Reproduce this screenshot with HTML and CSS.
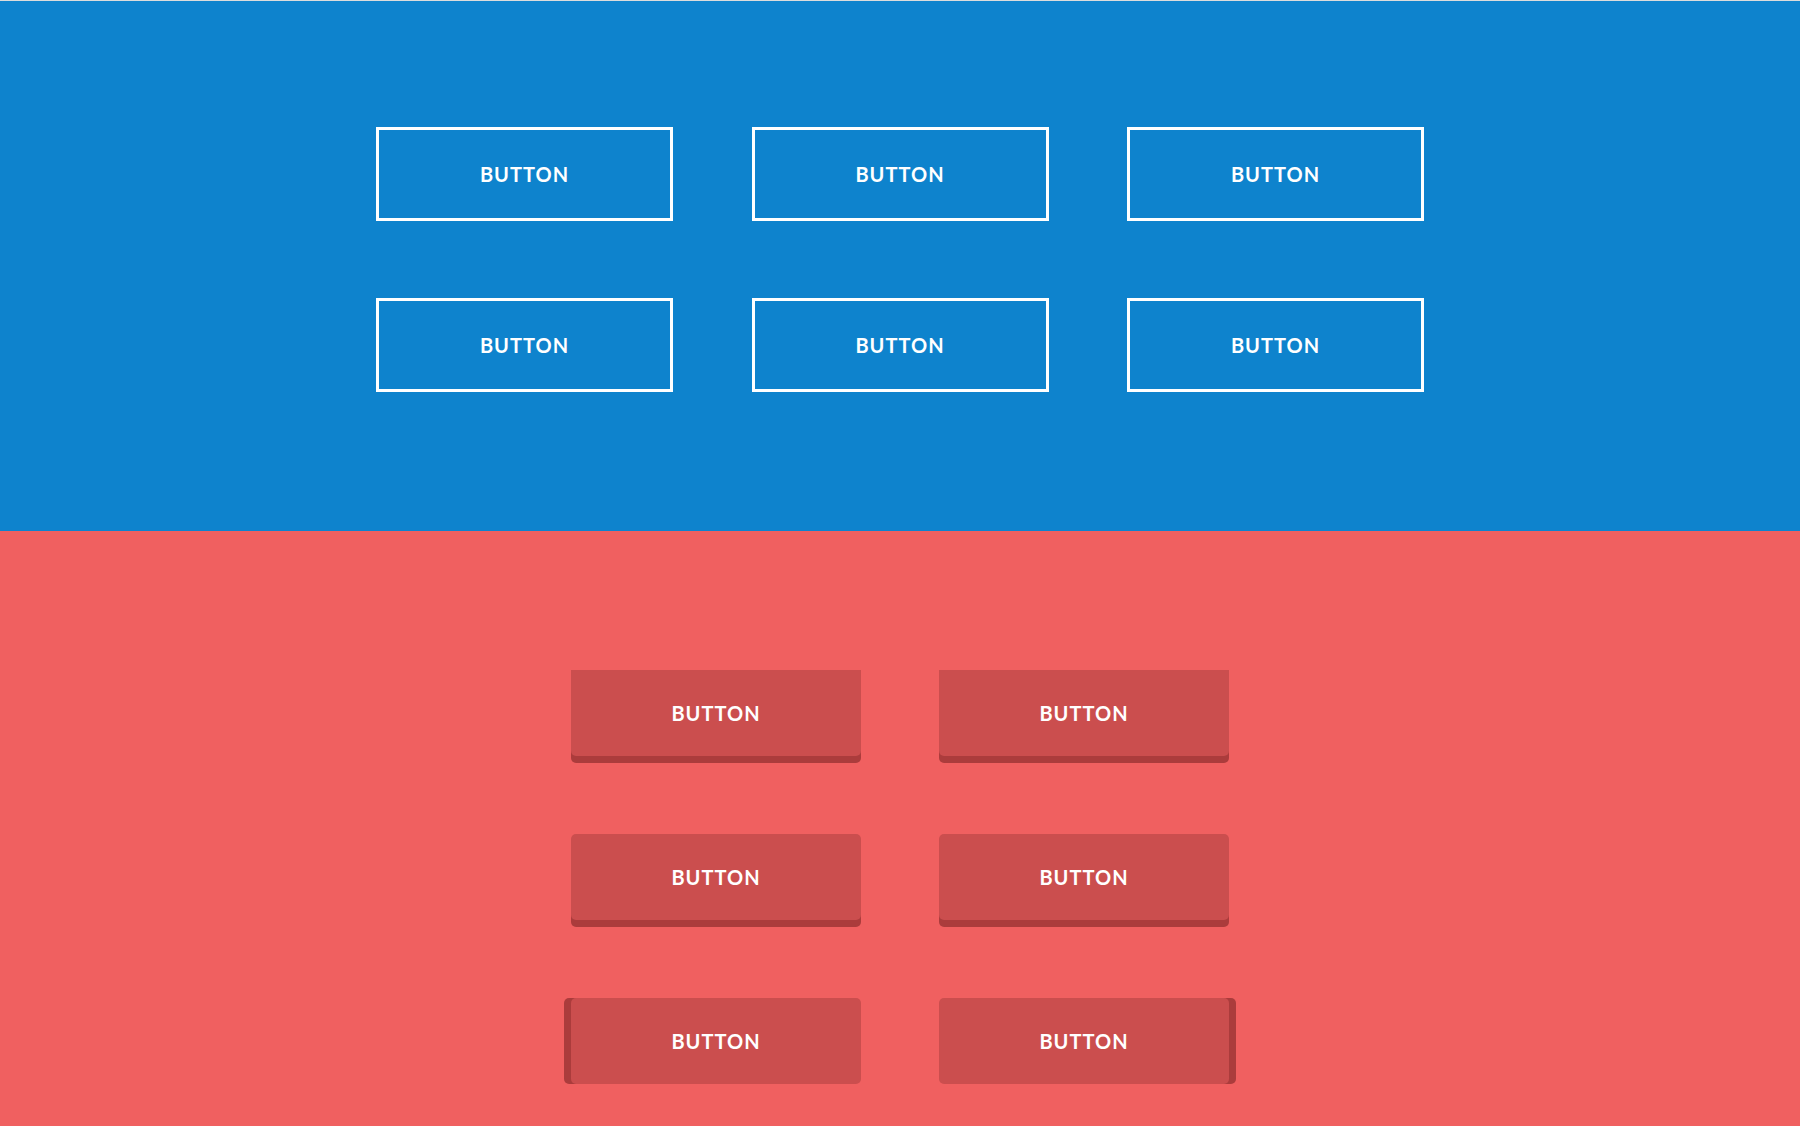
FILE: index.html
```html
<!DOCTYPE html>
<html lang="en">
<head>
  <meta charset="UTF-8" />
  <title>Creative Buttons</title>
  <link rel="stylesheet" href="styles.css">
</head>
<body>
  <section class="section section-blue">
    <div class="btn-grid btn-grid-3">
      <button class="btn btn-outline">Button</button>
      <button class="btn btn-outline">Button</button>
      <button class="btn btn-outline">Button</button>
      <button class="btn btn-outline">Button</button>
      <button class="btn btn-outline">Button</button>
      <button class="btn btn-outline">Button</button>
    </div>
  </section>

  <section class="section section-red">
    <div class="btn-grid btn-grid-2">
      <button class="btn btn-3d btn-3d-flat">Button</button>
      <button class="btn btn-3d btn-3d-flat">Button</button>
      <button class="btn btn-3d btn-3d-down">Button</button>
      <button class="btn btn-3d btn-3d-down">Button</button>
      <button class="btn btn-3d btn-3d-left">Button</button>
      <button class="btn btn-3d btn-3d-right">Button</button>
    </div>
  </section>
</body>
</html>
```

FILE: styles.css
```css
body {
  margin: 0;
  border-top: 1px solid #dcdcdc;
  font-family: Lato, 'Liberation Sans', Arial, sans-serif;
  color: #fff;
}

.section {
  box-sizing: border-box;
}

.section-blue {
  background-color: #0e83cd;
  height: 530px;
  padding-top: 126px;
}

.section-red {
  background-color: #f06060;
  height: 595px;
  padding-top: 139px;
}

.btn-grid {
  display: grid;
  justify-content: center;
  gap: 78px;
}

.btn-grid-3 {
  grid-template-columns: repeat(3, 297px);
  column-gap: 78.5px;
  row-gap: 77px;
}

.btn-grid-2 {
  grid-template-columns: repeat(2, 290px);
  row-gap: 78px;
}

.btn {
  font-family: inherit;
  font-size: 20px;
  font-weight: 700;
  letter-spacing: 1px;
  text-transform: uppercase;
  color: #fff;
  background: none;
  border: none;
  padding: 0;
  margin: 0;
  cursor: pointer;
  outline: none;
}

.btn-outline {
  height: 94px;
  border: 3px solid #fff;
}

.btn-3d {
  height: 86px;
  background-color: #cb4e4e;
  border-radius: 5px;
}

.btn-3d-flat {
  border-radius: 0 0 5px 5px;
  box-shadow: 0 7px #ab3c3c;
}

.btn-3d-down {
  box-shadow: 0 7px #ab3c3c;
}

.btn-3d-left {
  box-shadow: -7px 0 #ab3c3c;
}

.btn-3d-right {
  box-shadow: 7px 0 #ab3c3c;
}
```
